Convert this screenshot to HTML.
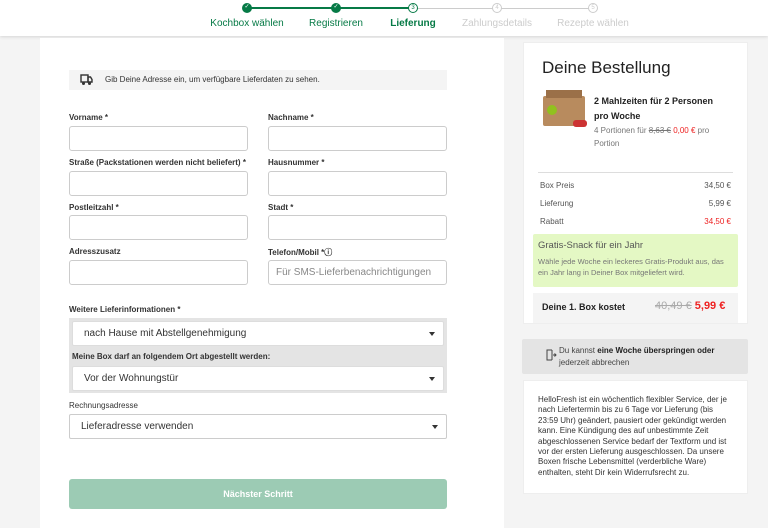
<!DOCTYPE html><html><head><style>
*{margin:0;padding:0;box-sizing:border-box}
body{width:768px;height:528px;background:#f4f4f4;font-family:"Liberation Sans",sans-serif;position:relative;overflow:hidden;color:#333}
.a{position:absolute}
.hdr{left:0;top:0;width:768px;height:36px;background:#fff;box-shadow:0 1px 3px rgba(0,0,0,.12)}
.dot{width:10px;height:10px;border-radius:50%;top:3px;font-size:6px;text-align:center;line-height:9px}
.done{background:#067a46;color:#fff}
.cur{border:1px solid #067a46;color:#067a46;background:#fff}
.fut{border:1px solid #ccc;color:#ccc;background:#fff}
.st{top:18px;font-size:10px;color:#067a46;transform:translateX(-50%);white-space:nowrap}
.lbl{font-size:8px;font-weight:bold;color:#333}
.inp{height:25px;border:1px solid #ccc;border-radius:3px;background:#fff;width:179px}
.sel{background:#fff;border:1px solid #ddd;border-radius:2px;font-size:10px;padding-left:11px;line-height:23px}
.sel:after{content:"";position:absolute;right:8px;top:10px;border:3px solid transparent;border-top:4px solid #333}
.row{font-size:8px;color:#555;left:540px;width:191px}
.row span{float:right}
</style></head><body>
<div class="a hdr"></div>
<div class="a" style="left:247px;top:7px;width:89px;height:2px;background:#067a46"></div>
<div class="a" style="left:336px;top:7px;width:77px;height:2px;background:#067a46"></div>
<div class="a" style="left:413px;top:8px;width:180px;height:1px;background:#ccc"></div>
<div class="a dot done" style="left:242px">✓</div>
<div class="a dot done" style="left:331px">✓</div>
<div class="a dot cur" style="left:408px">3</div>
<div class="a dot fut" style="left:492px">4</div>
<div class="a dot fut" style="left:588px">5</div>
<div class="a st" style="left:247px">Kochbox wählen</div>
<div class="a st" style="left:336px">Registrieren</div>
<div class="a st" style="left:413px;font-weight:bold">Lieferung</div>
<div class="a st" style="left:497px;color:#ccc">Zahlungsdetails</div>
<div class="a st" style="left:593px;color:#ccc">Rezepte wählen</div>

<div class="a" style="left:40px;top:38px;width:464px;height:490px;background:#fff"></div>
<div class="a" style="left:69px;top:70px;width:378px;height:20px;background:#f4f4f4;font-size:8px;line-height:20px;padding-left:36px;color:#333">Gib Deine Adresse ein, um verfügbare Lieferdaten zu sehen.</div>
<svg class="a" style="left:80px;top:74px" width="13" height="12" viewBox="0 0 13 12"><rect x="1" y="1" width="7" height="7" fill="none" stroke="#333" stroke-width="1.4"/><path d="M8 3h2.5l1.5 2.5V8H8z" fill="none" stroke="#333" stroke-width="1.4"/><circle cx="3.5" cy="9.5" r="1.5" fill="#333"/><circle cx="9.5" cy="9.5" r="1.5" fill="#333"/></svg>

<div class="a lbl" style="left:69px;top:113px">Vorname *</div>
<div class="a lbl" style="left:268px;top:113px">Nachname *</div>
<div class="a inp" style="left:69px;top:126px"></div><div class="a inp" style="left:268px;top:126px"></div>
<div class="a lbl" style="left:69px;top:158px">Straße (Packstationen werden nicht beliefert) *</div>
<div class="a lbl" style="left:268px;top:158px">Hausnummer *</div>
<div class="a inp" style="left:69px;top:171px"></div><div class="a inp" style="left:268px;top:171px"></div>
<div class="a lbl" style="left:69px;top:203px">Postleitzahl *</div>
<div class="a lbl" style="left:268px;top:203px">Stadt *</div>
<div class="a inp" style="left:69px;top:215px"></div><div class="a inp" style="left:268px;top:215px"></div>
<div class="a lbl" style="left:69px;top:247px">Adresszusatz</div>
<div class="a lbl" style="left:268px;top:247px">Telefon/Mobil *ⓘ</div>
<div class="a inp" style="left:69px;top:260px"></div>
<div class="a inp" style="left:268px;top:260px;font-size:10px;color:#888;padding-left:7px;line-height:23px">Für SMS-Lieferbenachrichtigungen</div>

<div class="a lbl" style="left:69px;top:305px">Weitere Lieferinformationen *</div>
<div class="a" style="left:69px;top:318px;width:378px;height:75px;background:#e4e4e4"></div>
<div class="a sel" style="left:72px;top:321px;width:372px;height:25px">nach Hause mit Abstellgenehmigung</div>
<div class="a lbl" style="left:72px;top:352px">Meine Box darf an folgendem Ort abgestellt werden:</div>
<div class="a sel" style="left:72px;top:366px;width:372px;height:25px">Vor der Wohnungstür</div>
<div class="a" style="left:69px;top:401px;font-size:8px;color:#333">Rechnungsadresse</div>
<div class="a sel" style="left:69px;top:414px;width:378px;height:25px;border-color:#ccc">Lieferadresse verwenden</div>
<div class="a" style="left:69px;top:479px;width:378px;height:30px;background:#9ccbb4;border-radius:3px;color:#fff;font-size:9px;font-weight:bold;text-align:center;line-height:30px">Nächster Schritt</div>

<div class="a" style="left:523px;top:42px;width:225px;height:282px;background:#fff;border:1px solid #eee"></div>
<div class="a" style="left:542px;top:58px;font-size:17px;color:#222">Deine Bestellung</div>
<div class="a" style="left:543px;top:96px;width:42px;height:30px;background:#b88b5e;border-radius:2px"></div>
<div class="a" style="left:546px;top:90px;width:36px;height:8px;background:#9b7048"></div>
<div class="a" style="left:547px;top:105px;width:10px;height:10px;border-radius:50%;background:#91c11e"></div>
<div class="a" style="left:573px;top:120px;width:14px;height:7px;border-radius:3px;background:#c33"></div>
<div class="a" style="left:594px;top:94px;font-size:9px;font-weight:bold;line-height:15px;width:130px;color:#222">2 Mahlzeiten für 2 Personen pro Woche</div>
<div class="a" style="left:594px;top:124px;font-size:8px;line-height:13px;width:130px;color:#777">4 Portionen für <s>8,63 €</s> <span style="color:#e22">0,00 €</span> pro Portion</div>
<div class="a" style="left:538px;top:172px;width:195px;height:1px;background:#ddd"></div>
<div class="a row" style="top:181px">Box Preis<span>34,50 €</span></div>
<div class="a row" style="top:199px">Lieferung<span>5,99 €</span></div>
<div class="a row" style="top:217px">Rabatt<span style="color:#e22">34,50 €</span></div>
<div class="a" style="left:533px;top:234px;width:205px;height:53px;background:#e4f8c4;border-radius:2px;padding:6px 5px;color:#555">
<div style="font-size:9.5px">Gratis-Snack für ein Jahr</div>
<div style="font-size:7.5px;line-height:11px;margin-top:5px;color:#777">Wähle jede Woche ein leckeres Gratis-Produkt aus, das ein Jahr lang in Deiner Box mitgeliefert wird.</div></div>
<div class="a" style="left:533px;top:293px;width:205px;height:30px;background:#f4f4f4"></div>
<div class="a" style="left:542px;top:302px;font-size:9px;font-weight:bold;color:#222">Deine 1. Box kostet</div>
<div class="a" style="left:655px;top:300px;font-size:11px;color:#aaa"><s>40,49 €</s> <b style="color:#e22">5,99 €</b></div>

<div class="a" style="left:522px;top:339px;width:226px;height:35px;background:#e4e4e4;border-radius:2px"></div>
<svg class="a" style="left:546px;top:349px" width="11" height="12" viewBox="0 0 11 12"><path d="M6 1H1v10h5M6 1v10M7 6h3M8.5 4.5L10 6 8.5 7.5" fill="none" stroke="#444" stroke-width="1"/></svg>
<div class="a" style="left:559px;top:345px;font-size:8px;line-height:12px;width:175px;color:#444">Du kannst <b style="color:#222">eine Woche überspringen oder</b> jederzeit abbrechen</div>
<div class="a" style="left:523px;top:380px;width:225px;height:114px;background:#fff;border:1px solid #eee"></div>
<div class="a" style="left:538px;top:395px;width:196px;font-size:8px;line-height:10.4px;color:#333">HelloFresh ist ein wöchentlich flexibler Service, der je nach Liefertermin bis zu 6 Tage vor Lieferung (bis 23:59 Uhr) geändert, pausiert oder gekündigt werden kann. Eine Kündigung des auf unbestimmte Zeit abgeschlossenen Service bedarf der Textform und ist vor der ersten Lieferung ausgeschlossen. Da unsere Boxen frische Lebensmittel (verderbliche Ware) enthalten, steht Dir kein Widerrufsrecht zu.</div>
</body></html>
